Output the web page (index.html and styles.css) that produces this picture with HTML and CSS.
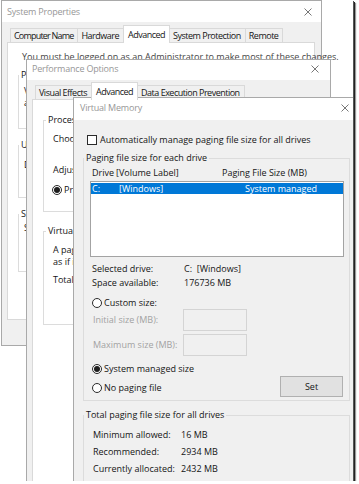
FILE: index.html
```html
<!DOCTYPE html>
<html>
<head>
<meta charset="utf-8">
<title>Virtual Memory</title>
<link rel="stylesheet" href="styles.css">
</head>
<body>
<div class="screen">

  <section class="win sp">
    <header class="titlebar">
      <span class="title">System Properties</span>
      <svg class="close" width="8" height="8" viewBox="0 0 8 8"><path d="M0.5 0.5L7.5 7.5M7.5 0.5L0.5 7.5"/></svg>
    </header>
    <div class="body">
      <nav class="tabs">
        <span class="tab tab-cn">Computer Name</span>
        <span class="tab">Hardware</span>
        <span class="tab active">Advanced</span>
        <span class="tab">System Protection</span>
        <span class="tab">Remote</span>
      </nav>
      <div class="pane sp-pane">
        <p class="line sp-note">You must be logged on as an Administrator to make most of these changes.</p>
        <fieldset class="group sp-group sp-perf">
          <legend>Performance</legend>
          <p class="line sp-text">Visual effects, processor scheduling, memory usage,<br>and virtual memory</p>
        </fieldset>
        <fieldset class="group sp-group sp-user">
          <legend>User Profiles</legend>
          <p class="line sp-text">Desktop settings related to your sign-in</p>
        </fieldset>
        <fieldset class="group sp-group sp-start">
          <legend>Startup and Recovery</legend>
          <p class="line sp-text">System startup, system failure, and debugging information</p>
        </fieldset>
      </div>
    </div>
  </section>

  <section class="win po">
    <header class="titlebar">
      <span class="title">Performance Options</span>
      <svg class="close" width="8" height="8" viewBox="0 0 8 8"><path d="M0.5 0.5L7.5 7.5M7.5 0.5L0.5 7.5"/></svg>
    </header>
    <div class="body">
      <nav class="tabs">
        <span class="tab">Visual Effects</span>
        <span class="tab active">Advanced</span>
        <span class="tab">Data Execution Prevention</span>
      </nav>
      <div class="pane po-pane">
        <fieldset class="group po-group po-cpu">
          <legend>Processor scheduling</legend>
          <p class="line po-text po-choose">Choose how to allocate processor resources.</p>
          <p class="line po-text po-adjust">Adjust for best performance of:</p>
          <div class="po-radios">
            <span class="opt"><span class="radio on"></span>Programs</span>
            <span class="opt"><span class="radio"></span>Background services</span>
          </div>
        </fieldset>
        <fieldset class="group po-group po-vm">
          <legend>Virtual memory</legend>
          <p class="line po-text po-desc">A paging file is an area on the hard disk that Windows uses<br>as if it were RAM.</p>
          <p class="line po-text po-total">Total paging file size for all drives:&nbsp;&nbsp;&nbsp;2432 MB</p>
        </fieldset>
      </div>
    </div>
  </section>

  <section class="win vm">
    <header class="titlebar">
      <span class="title">Virtual Memory</span>
      <svg class="close" width="8" height="8" viewBox="0 0 8 8"><path d="M0.5 0.5L7.5 7.5M7.5 0.5L0.5 7.5"/></svg>
    </header>
    <div class="body vm-body">
      <label class="opt vm-auto"><span class="check"></span>Automatically manage paging file size for all drives</label>

      <fieldset class="group vm-group vm-drives">
        <legend>Paging file size for each drive</legend>
        <div class="cols cols-head">
          <span>Drive</span><span>[Volume Label]</span><span>Paging File Size (MB)</span>
        </div>
        <div class="listbox">
          <div class="cols cols-row selected">
            <span>C:</span><span>[Windows]</span><span>System managed</span>
          </div>
        </div>
        <div class="info first"><span>Selected drive:</span><span>C:&nbsp;&nbsp;[Windows]</span></div>
        <div class="info"><span>Space available:</span><span>176736 MB</span></div>

        <div class="opt vm-radio vm-custom"><span class="radio"></span>Custom size:</div>
        <div class="size-row"><span class="disabled">Initial size (MB):</span><span class="field"></span></div>
        <div class="size-row second"><span class="disabled">Maximum size (MB):</span><span class="field"></span></div>
        <div class="opt vm-radio vm-system"><span class="radio on"></span>System managed size</div>
        <div class="set-row">
          <div class="opt vm-radio vm-none"><span class="radio"></span>No paging file</div>
          <span class="btn">Set</span>
        </div>
      </fieldset>

      <fieldset class="group vm-group vm-total">
        <legend>Total paging file size for all drives</legend>
        <div class="total first"><span>Minimum allowed:</span><span>16 MB</span></div>
        <div class="total"><span>Recommended:</span><span>2934 MB</span></div>
        <div class="total"><span>Currently allocated:</span><span>2432 MB</span></div>
      </fieldset>
    </div>
  </section>

</div>
</body>
</html>
```

FILE: styles.css
```css
* { box-sizing: border-box; }

html, body {
  margin: 0;
  padding: 0;
  background: #fff;
}

body {
  font-family: "Open Sans", "Noto Sans", sans-serif;
  font-size: 9px;
  line-height: 12px;
  color: #151515;
}

.screen {
  position: relative;
  width: 353px;
  height: 481px;
  overflow: hidden;
  background: #fff;
  box-shadow: 1px 1px 0 #555, 2px 2px 0 #222, 3px 3px 1px #999;
}

/* ---------- windows ---------- */
.win {
  position: absolute;
  display: flex;
  flex-direction: column;
  border: 1px solid #a9a9a9;
  background: #f0f0f0;
}
.sp { left: 1px; top: 0; width: 321px; height: 346px; }
.po { left: 26px; top: 59px; width: 305px; height: 440px; }
.vm { left: 73px; top: 97px; width: 296px; height: 400px; }

.titlebar {
  flex: none;
  display: flex;
  align-items: center;
  justify-content: space-between;
  background: #fff;
  color: #979797;
}
.title { letter-spacing: -0.2px; }
.sp .titlebar { height: 21px; padding: 1px 9px 0 5px; }
.po .titlebar { height: 20px; padding: 0 11px 3px 5px; }
.vm .titlebar { height: 22px; padding: 0 19px 2px 6px; }

.close path {
  stroke: #777;
  stroke-width: 1;
  fill: none;
}

.body {
  flex: 1;
  display: flex;
  flex-direction: column;
}
.sp .body { padding: 3px 6px 0 5px; }
.po .body { padding: 2px 6px 0 5px; }

/* ---------- tabs ---------- */
.tabs {
  flex: none;
  display: flex;
  align-items: flex-end;
  height: 17px;
  margin-left: 3px;
}
.tab {
  height: 14px;
  padding: 0 4px 0 3px;
  line-height: 13px;
  letter-spacing: -0.5px;
  border: 1px solid #d9d9d9;
  border-bottom: none;
  margin-right: -1px;
  background: #f0f0f0;
  white-space: nowrap;
}
.tab-cn { letter-spacing: -0.8px; }
.tab.active {
  position: relative;
  z-index: 1;
  height: 18px;
  margin: 0 -1px -1px 0;
  padding: 2px 4px 0 4px;
  background: #fff;
}

.pane {
  background: #fff;
  border: 1px solid #d9d9d9;
}
.sp-pane { height: 278px; padding: 8px 10px 0 10px; }
.po-pane { flex: 1; padding: 14px 11px 0 10px; }

p { margin: 0; }
.line { white-space: nowrap; }

/* ---------- group boxes ---------- */
.group {
  margin: 0;
  min-width: 0;
  border: 1px solid #dcdcdc;
  padding: 0;
}
.group legend {
  padding: 0 2px;
  line-height: 12px;
}

/* system properties */
.sp-note { margin-left: 4px; color: #444; }
.sp-group { margin-top: 6px; }
.sp-user, .sp-start { margin-top: 10px; }
.sp-text { margin-left: 5px; }
.sp-perf .sp-text { margin-top: 4px; }
.sp-perf { padding-bottom: 19px; }
.sp-user .sp-text { margin-top: 8px; }
.sp-user { padding-bottom: 26px; }
.sp-start .sp-text { margin-top: 2px; }
.sp-start { padding-bottom: 37px; }

/* performance options */
.po-group { padding-left: 2px; }
.po-vm { margin-top: 13px; padding-bottom: 38px; }
.po-cpu { padding-bottom: 15px; }
.po-text { margin-left: 7px; }
.po-choose { margin-top: 7px; }
.po-adjust { margin-top: 19px; }
.po-desc { margin-top: 7px; }
.po-total { margin-top: 6px; }
.po-radios {
  display: flex;
  gap: 40px;
  margin: 8px 0 0 6px;
}

/* ---------- controls ---------- */
.opt {
  display: flex;
  align-items: center;
  height: 12px;
  white-space: nowrap;
}
.radio {
  flex: none;
  display: flex;
  align-items: center;
  justify-content: center;
  width: 10px;
  height: 10px;
  margin-right: 2px;
  border: 1px solid #2b2b2b;
  border-radius: 50%;
  background: #fff;
}
.radio.on::after {
  content: "";
  width: 6px;
  height: 6px;
  border-radius: 50%;
  background: #1e1e1e;
}
.check {
  flex: none;
  width: 10px;
  height: 10px;
  margin-right: 3px;
  border: 1px solid #2b2b2b;
  background: #fff;
}

/* ---------- virtual memory ---------- */
.vm-body { padding: 14px 18px 0 9px; }
.vm-auto { margin-left: 4px; }

.vm-drives { margin-top: 6px; padding-bottom: 3px; }
.vm-total { margin-top: 8px; flex: 1; }

.cols {
  display: grid;
  white-space: nowrap;
}
.cols-head {
  grid-template-columns: 24px 106px auto;
  margin-top: 3px;
  padding-left: 8px;
}
.listbox {
  height: 76px;
  margin: 2px 5px 0 6px;
  padding-top: 1px;
  border: 1px solid #a3a3a3;
  background: #fff;
}
.cols-row {
  grid-template-columns: 27px 126px auto;
  height: 11px;
  line-height: 11px;
  padding-left: 1px;
}
.selected {
  background: #0078d7;
  color: #fff;
}

.info {
  display: grid;
  grid-template-columns: 92px auto;
  line-height: 14px;
  padding-left: 8px;
}
.info.first { margin-top: 5px; }

.vm-radio { padding-left: 8px; }
.vm-custom { margin-top: 7px; }
.vm-system { margin-top: 7px; }

.size-row {
  display: grid;
  grid-template-columns: 90px 64px;
  align-items: center;
  height: 22px;
  padding-left: 9px;
}
.size-row.second { margin-top: 3px; }
.disabled { color: #a2a2a2; white-space: nowrap; }
.field {
  height: 22px;
  border: 1px solid #d4d4d4;
  background: #f0f0f0;
}

.set-row {
  display: flex;
  align-items: center;
  justify-content: space-between;
  margin-top: 1px;
  padding-right: 6px;
}
.vm-none { margin-top: 3px; }
.btn {
  display: flex;
  align-items: center;
  justify-content: center;
  width: 63px;
  height: 21px;
  border: 1px solid #b0b0b0;
  background: #e1e1e1;
}

.total {
  display: grid;
  grid-template-columns: 88px auto;
  line-height: 17px;
  padding-left: 9px;
}
.total.first { margin-top: 5px; }
```
